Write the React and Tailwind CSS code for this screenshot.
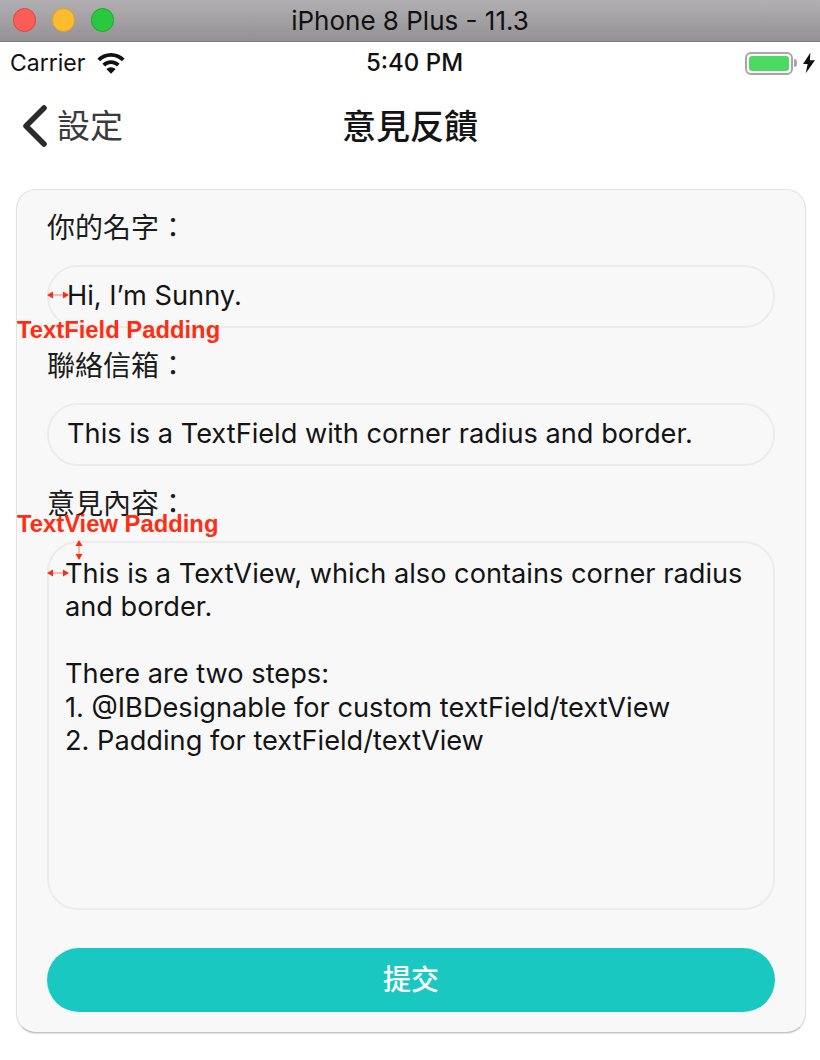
const sans = "font-['Inter','Noto_Sans_CJK_TC',sans-serif]";

const Label = ({ children, className = "" }) => (
  <p className={`h-[38px] text-[28px] leading-[41px] text-[#1c1c1c] ${className}`}>{children}</p>
);

const TextField = ({ children }) => (
  <div className="flex h-[63px] items-center rounded-[31px] border-2 border-[#ececec] pl-[18px] text-[27.2px] text-[#141414]">
    {children}
  </div>
);

// red double arrow drawn on the screenshot
const ArrowH = ({ className }) => (
  <svg className={className} width="22" height="8" viewBox="0 0 22 8">
    <path d="M3 4h16" stroke="#ff7a66" strokeWidth="1" />
    <path d="M0 4l6-3.500v7zM22 4l-6-3.500v7z" fill="#ff2a10" />
  </svg>
);

const ArrowV = ({ className }) => (
  <svg className={className} width="8" height="20" viewBox="0 0 8 20">
    <path d="M4 3v14" stroke="#ff7a66" strokeWidth="1" />
    <path d="M4 0L0.500 6h7zM4 20l-3.500-6h7z" fill="#ff2a10" />
  </svg>
);

const Note = ({ children, className }) => (
  <span className={`absolute font-['Liberation_Sans',sans-serif] text-[23.8px] leading-none font-bold whitespace-nowrap text-[#ff2d12] ${className}`}>
    {children}
  </span>
);

const WifiIcon = () => (
  <svg width="28" height="21" viewBox="0 0 28 21" fill="#111">
    <path d="M14 0C8.600 0 3.800 2.100 0.400 5.600L3 8.300C5.800 5.500 9.700 3.700 14 3.700s8.200 1.800 11 4.600l2.600-2.700C24.200 2.100 19.400 0 14 0z" />
    <path d="M14 7.200c-3.400 0-6.400 1.300-8.600 3.500l2.700 2.800c1.500-1.500 3.600-2.500 5.900-2.500s4.400 1 5.900 2.500l2.700-2.800c-2.200-2.200-5.200-3.500-8.600-3.500z" />
    <path d="M14 14.300c-1.800 0-3.400 0.700-4.500 1.900L14 20.800l4.500-4.600c-1.100-1.200-2.700-1.900-4.500-1.900z" />
  </svg>
);

export default function App() {
  return (
    <div className={`relative h-[1060px] w-[820px] overflow-hidden bg-white ${sans}`}>
      {/* Simulator title bar */}
      <div className="relative flex h-[42px] items-center justify-center border-b border-[#7f7d7f] bg-gradient-to-b from-[#b2b0b2] to-[#939193]">
        <div className="absolute top-[8px] left-[13px] flex gap-[16px]">
          <span className="h-[24px] w-[23px] rounded-full border border-[#e0443e] bg-[#fc5c57]" />
          <span className="h-[24px] w-[23px] rounded-full border border-[#dea123] bg-[#fdbc2e]" />
          <span className="h-[24px] w-[23px] rounded-full border border-[#1aab29] bg-[#28c93f]" />
        </div>
        <span className="text-[26px] text-[#111]">iPhone 8 Plus - 11.3</span>
      </div>

      {/* Status bar */}
      <div className="relative flex h-[42px] items-center justify-between pr-[5px] pl-[10px] text-[#111]">
        <div className="flex items-center gap-[12px]">
          <span className="text-[23px]">Carrier</span>
          <WifiIcon />
        </div>
        <span className="absolute left-[366px] text-[24px] font-medium">5:40 PM</span>
        <div className="flex items-center gap-[6px]">
          <div className="flex items-center">
            <div className="h-[23px] w-[48px] rounded-[6px] border-2 border-[#a6a6a6] p-[2px]">
              <div className="h-full w-full rounded-[3px] bg-[#4cd964]" />
            </div>
            <div className="ml-[1px] h-[8px] w-[3px] rounded-r-full bg-[#a6a6a6]" />
          </div>
          <svg width="12" height="22" viewBox="0 0 13 22">
            <path d="M8 0L0 12h5l-2 10L13 8H7.500z" fill="#111" />
          </svg>
        </div>
      </div>

      {/* Navigation bar */}
      <div className="relative flex h-[84px] items-center justify-center">
        <div className="absolute left-[22px] flex items-center gap-[9px]">
          <svg width="26" height="42" viewBox="0 0 26 42">
            <path d="M22 3L4 21l18 18" fill="none" stroke="#2b2b2b" strokeWidth="5.500" strokeLinecap="round" strokeLinejoin="round" />
          </svg>
          <span className="pt-[2px] text-[33px] text-[#3a3a3a]">設定</span>
        </div>
        <span className="text-[34px] font-medium text-[#141414]">意見反饋</span>
      </div>

      {/* Form card */}
      <div className="mx-[16px] mt-[21px] flex h-[844px] w-[790px] flex-col rounded-[20px] border border-[#e2e2e2] border-b-[#c4c4c4] bg-[#f8f8f8] px-[30px] pt-[18px] shadow-[0_1px_1px_rgba(0,0,0,0.12)]">
        <Label className="mb-[19px]">你的名字：</Label>
        <TextField>Hi, I’m Sunny.</TextField>
        <Label className="mt-[18px] mb-[19px]">聯絡信箱：</Label>
        <TextField>This is a TextField with corner radius and border.</TextField>
        <Label className="mt-[18px] mb-[19px]">意見內容：</Label>
        <div className="h-[369px] rounded-[31px] border-2 border-[#ececec] pt-[14px] pr-[20px] pl-[16px] text-[27.2px] leading-[33.4px] text-[#141414]">
          <p>This is a TextView, which also contains corner radius and border.</p>
          <p className="mt-[33.4px]">There are two steps:</p>
          <p>1. @IBDesignable for custom textField/textView</p>
          <p>2. Padding for textField/textView</p>
        </div>
        <button className="mt-[38px] flex h-[64px] items-center justify-center rounded-[32px] bg-[#19c9c1] text-[28px] font-medium text-white">
          提交
        </button>
      </div>

      {/* Annotations on top of the screenshot */}
      <ArrowH className="absolute top-[291px] left-[47px]" />
      <Note className="top-[318px] left-[17px]">TextField Padding</Note>
      <Note className="top-[512px] left-[17px]">TextView Padding</Note>
      <ArrowV className="absolute top-[540px] left-[75px]" />
      <ArrowH className="absolute top-[569px] left-[47px]" />
    </div>
  );
}
